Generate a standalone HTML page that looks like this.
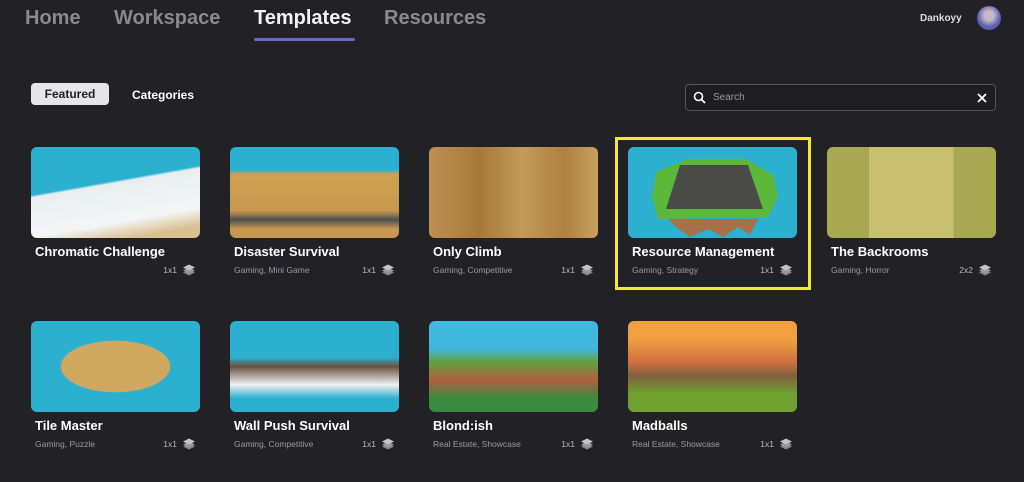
<!DOCTYPE html>
<html><head><style>
*{margin:0;padding:0;box-sizing:border-box}
body{width:1024px;height:482px;background:#222226;font-family:"Liberation Sans",sans-serif;position:relative;overflow:hidden;color:#fff}
.nav{position:absolute;top:7px;font-size:20px;font-weight:bold;color:#8a8a8e}
.card{position:absolute;width:169px}
.img{width:169px;height:91px;border-radius:6px;overflow:hidden}
.t{position:absolute;top:97px;left:4px;font-size:13px;font-weight:bold;white-space:nowrap}
.m{position:absolute;top:118px;left:4px;font-size:8.5px;color:#9a9aa0}
.s{position:absolute;top:117px;right:4px;font-size:8.5px;color:#bbb;display:flex;align-items:center;gap:5px}
</style></head><body>
<svg width="0" height="0" style="position:absolute"><defs><symbol id="st" viewBox="0 0 14 12"><path d="M7 5.5L13 8.5L7 11.5L1 8.5Z" fill="#888"/><path d="M7 3.5L13 6.5L7 9.5L1 6.5Z" fill="#9a9a9a"/><path d="M7 0.5L13 3.5L7 6.5L1 3.5Z" fill="#c4c4c4"/></symbol></defs></svg>
<div class="nav" style="left:25px">Home</div>
<div class="nav" style="left:114px">Workspace</div>
<div class="nav" style="left:254px;color:#f2f2f2">Templates</div>
<div class="nav" style="left:384px">Resources</div>
<div style="position:absolute;left:254px;top:38px;width:101px;height:3px;background:#6a68d0;border-radius:2px"></div>
<div style="position:absolute;left:920px;top:13px;font-size:10px;font-weight:bold;color:#ddd">Dankoyy</div>
<div style="position:absolute;left:977px;top:6px;width:24px;height:24px;border-radius:50%;background:radial-gradient(circle at 50% 40%,#c8b8c8 25%,#5a60b0 60%)"></div>
<div style="position:absolute;left:31px;top:83px;width:78px;height:22px;background:#e6e6ea;border-radius:4px;color:#222;font-size:12px;font-weight:bold;text-align:center;line-height:22px">Featured</div>
<div style="position:absolute;left:132px;top:88px;font-size:12px;font-weight:bold">Categories</div>
<div style="position:absolute;left:685px;top:84px;width:311px;height:27px;border:1px solid #55555c;border-radius:4px;background:#1e1e22"></div>
<svg style="position:absolute;left:693px;top:91px" width="13" height="13" viewBox="0 0 13 13"><circle cx="5.5" cy="5.5" r="4" stroke="#fff" stroke-width="1.6" fill="none"/><path d="M8.5 8.5L12 12" stroke="#fff" stroke-width="1.8"/></svg>
<div style="position:absolute;left:713px;top:92px;font-size:10px;color:#999">Search</div>
<svg style="position:absolute;left:977px;top:93px" width="10" height="10"><path d="M1 1L9 9M9 1L1 9" stroke="#fff" stroke-width="1.8"/></svg>
<div style="position:absolute;left:615px;top:137px;width:196px;height:153px;border:3px solid #f2ea3a"></div>

<div class="card" style="left:31px;top:147px"><div class="img" style="background:linear-gradient(170deg,#2bb0d0 40%,#e8eef0 42%,#f4f4f4 75%,#d8c090 90%)"></div><div class="t">Chromatic Challenge</div><div class="s">1x1<svg width="14" height="12"><use href="#st"/></svg></div></div>
<div class="card" style="left:230px;top:147px"><div class="img" style="background:linear-gradient(180deg,#2bb0d0 25%,#d0a050 30%,#c89850 70%,#505050 80%,#c89850 90%)"></div><div class="t">Disaster Survival</div><div class="m">Gaming, Mini Game</div><div class="s">1x1<svg width="14" height="12"><use href="#st"/></svg></div></div>
<div class="card" style="left:429px;top:147px"><div class="img" style="background:linear-gradient(90deg,#c09050,#a87838 30%,#c49a58 55%,#b08040 80%,#c8a060)"></div><div class="t">Only Climb</div><div class="m">Gaming, Competitive</div><div class="s">1x1<svg width="14" height="12"><use href="#st"/></svg></div></div>
<div class="card" style="left:628px;top:147px"><div class="img"><svg width="169" height="91"><rect width="169" height="91" fill="#2bb0d0"/><path d="M40 72L130 72L122 88L110 80L95 90L80 82L62 90L48 80Z" fill="#a87048"/><path d="M28 25L60 12L118 12L145 28L150 50L140 70L30 72L24 50Z" fill="#5cb83a"/><path d="M52 18L120 18L135 62L38 62Z" fill="#4a4a48"/></svg></div><div class="t">Resource Management</div><div class="m">Gaming, Strategy</div><div class="s">1x1<svg width="14" height="12"><use href="#st"/></svg></div></div>
<div class="card" style="left:827px;top:147px"><div class="img" style="background:linear-gradient(90deg,#a8a850 0 25%,#c8c070 25% 75%,#a8a850 75%)"></div><div class="t">The Backrooms</div><div class="m">Gaming, Horror</div><div class="s">2x2<svg width="14" height="12"><use href="#st"/></svg></div></div>

<div class="card" style="left:31px;top:321px"><div class="img" style="background:radial-gradient(ellipse 40% 35% at 50% 50%,#d0a860 80%,transparent 82%),#2bb0d0"></div><div class="t">Tile Master</div><div class="m">Gaming, Puzzle</div><div class="s">1x1<svg width="14" height="12"><use href="#st"/></svg></div></div>
<div class="card" style="left:230px;top:321px"><div class="img" style="background:linear-gradient(180deg,#2bb0d0 40%,#6a5040 50%,#f0f0f0 70%,#2bb0d0 85%)"></div><div class="t">Wall Push Survival</div><div class="m">Gaming, Competitive</div><div class="s">1x1<svg width="14" height="12"><use href="#st"/></svg></div></div>
<div class="card" style="left:429px;top:321px"><div class="img" style="background:linear-gradient(180deg,#40b8e0 30%,#60a040 45%,#b06040 65%,#3a8a40 85%)"></div><div class="t">Blond:ish</div><div class="m">Real Estate, Showcase</div><div class="s">1x1<svg width="14" height="12"><use href="#st"/></svg></div></div>
<div class="card" style="left:628px;top:321px"><div class="img" style="background:linear-gradient(180deg,#f0a040 20%,#d07040 45%,#806040 60%,#70a030 80%)"></div><div class="t">Madballs</div><div class="m">Real Estate, Showcase</div><div class="s">1x1<svg width="14" height="12"><use href="#st"/></svg></div></div>
</body></html>
